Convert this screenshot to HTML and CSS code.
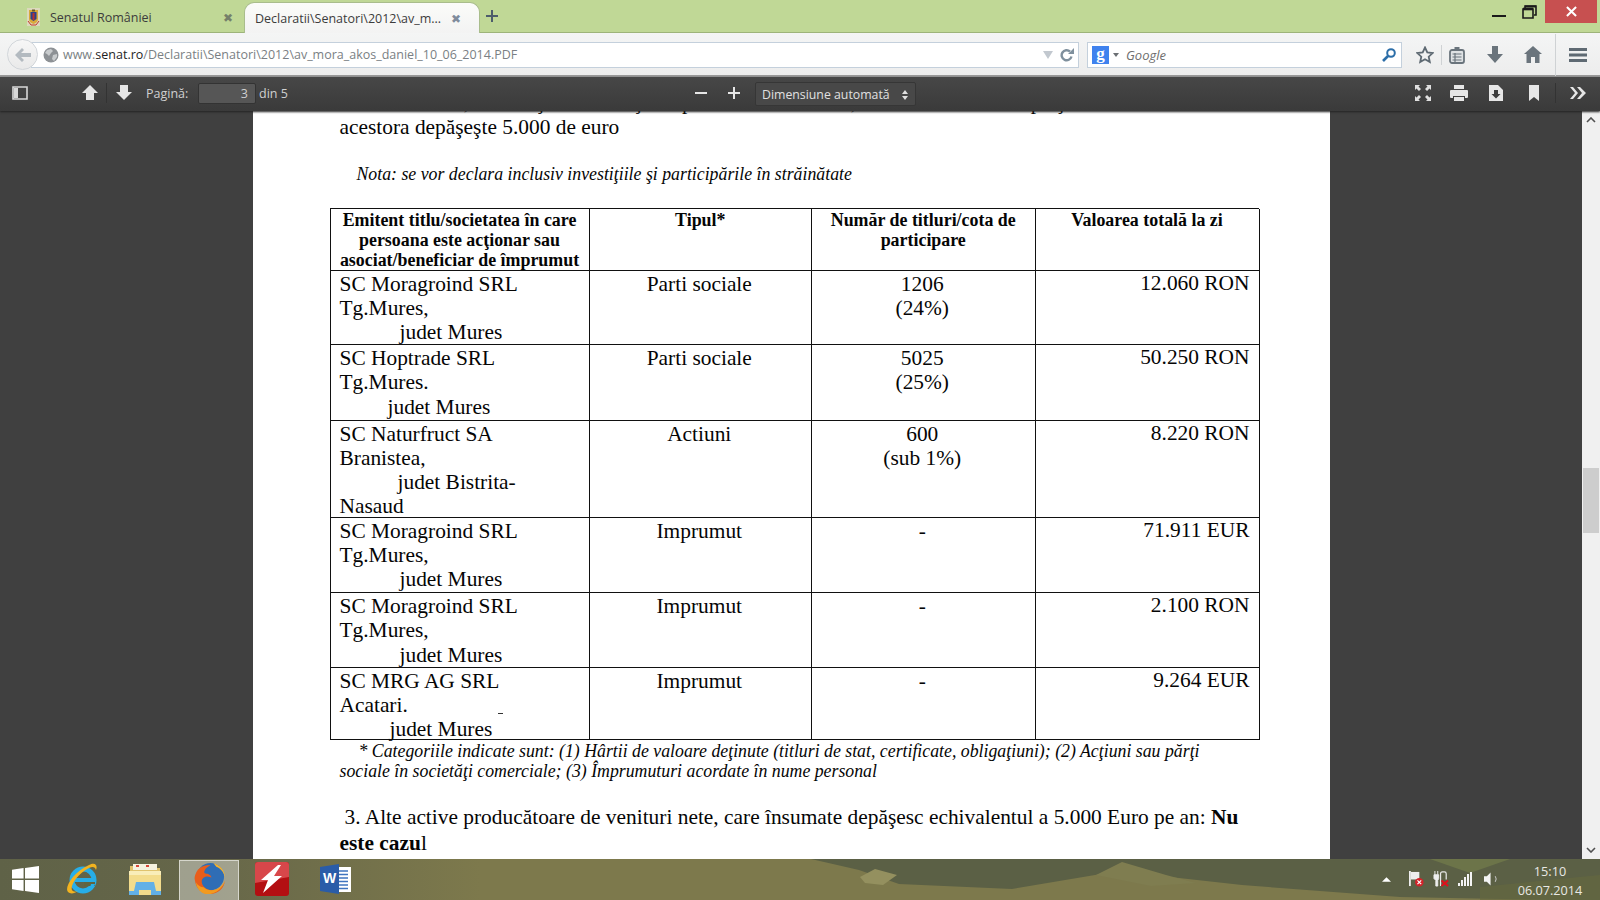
FILE: index.html
```html
<!DOCTYPE html>
<html lang="ro">
<head>
<meta charset="utf-8">
<title>Declaratii</title>
<link rel="stylesheet" href="styles.css">
</head>
<body>
<header class="tabbar">
  <div class="tab">
    <svg class="favicon" viewBox="0 0 13 18"><path d="M0 0h13v18H0z" fill="#dcd9bd"/><path d="M2 2h9v9c0 3-2 4-4.500 5C4 15 2 14 2 11z" fill="#d9a93a"/><path d="M3.500 4h6v7L6.500 13l-3-2z" fill="#2d3f8c"/><path d="M5.500 5h2v7h-2z" fill="#b8322a"/><path d="M5 1.500h3v2H5z" fill="#6b5a2a"/><path d="M1 13l3 4h5l3-4" fill="none" stroke="#c23a2a" stroke-width="1"/></svg>
    <span class="tab-title">Senatul României</span>
    <span class="tab-x">✖</span>
  </div>
  <div class="tab tab-active">
    <span class="tab-title">Declaratii\Senatori\2012\av_m...</span>
    <span class="tab-x tab-x-blue">✖</span>
  </div>
  <svg class="newtab" viewBox="0 0 12 12"><path d="M5 0h2v5h5v2H7v5H5V7H0V5h5z" fill="#4d5d6b"/></svg>
  <div class="winctl">
    <span class="win-min"></span>
    <svg class="win-restore" viewBox="0 0 15 14"><path d="M3 3V1h11v9h-2M1 4h10v9H1z" fill="none" stroke="#1a1a1a" stroke-width="1.600"/><path d="M1 4h10" stroke="#1a1a1a" stroke-width="2.600"/><path d="M3 1.500h11" stroke="#1a1a1a" stroke-width="2"/></svg>
    <div class="win-close"><svg viewBox="0 0 12 12"><path d="M1 1l10 10M11 1L1 11" stroke="#fff" stroke-width="2.200"/></svg></div>
  </div>
</header>

<nav class="navbar">
  <div class="back">
    <svg viewBox="0 0 16 14"><path d="M7 0l2 2-3 3h10v4H6l3 3-2 2-7-7z" fill="#b3bac0"/></svg>
  </div>
  <div class="urlbar">
    <svg class="globe" viewBox="0 0 16 16"><circle cx="8" cy="8" r="7.500" fill="#8d9195"/><path d="M4 3l4-1 2 2-2 2-2 3-2-2-2-1zM10 8l4-1 0 3-3 4-2-2z" fill="#c9ccce"/></svg>
    <span class="url"><span class="url-host">www.<b>senat.ro</b></span>/Declaratii\Senatori\2012\av_mora_akos_daniel_10_06_2014.PDF</span>
    <svg class="url-drop" viewBox="0 0 10 8"><path d="M0 0h10L5 8z" fill="#c2c8cf"/></svg>
    <svg class="url-reload" viewBox="0 0 14 14"><path d="M11.500 8.500A5 5 0 1 1 10 3.500" fill="none" stroke="#7f909d" stroke-width="2.400"/><path d="M8 6h6V0z" fill="#7f909d"/></svg>
  </div>
  <div class="searchbar">
    <span class="g-box">g</span>
    <svg class="g-drop" viewBox="0 0 6 4"><path d="M0 0h6L3 4z" fill="#6b6f73"/></svg>
    <span class="g-text">Google</span>
    <svg class="g-lens" viewBox="0 0 14 14"><circle cx="9" cy="5" r="3.800" fill="none" stroke="#2c6ea8" stroke-width="2"/><path d="M6 8l-5 5" stroke="#2c6ea8" stroke-width="2.600"/></svg>
  </div>
  <div class="navicons">
    <svg class="ni ni-star" viewBox="0 0 18 18"><path d="M9 1.500l2.300 5 5.300.6-3.900 3.600 1.100 5.300L9 13.300 4.200 16l1.100-5.300L1.400 7.100l5.300-.6z" fill="none" stroke="#5f6a73" stroke-width="1.800"/></svg>
    <span class="ni-sep"></span>
    <svg class="ni ni-clip" viewBox="0 0 16 18"><rect x="1" y="4" width="14" height="13" rx="2" fill="#dfe2e4" stroke="#6a747c" stroke-width="1.800"/><path d="M5.500 1h5v4h-5z" fill="#6a747c"/><path d="M3.500 8h9M3.500 11h9M3.500 14h9M6 7v9" stroke="#6a747c" stroke-width="1.200"/></svg>
    <svg class="ni ni-down" viewBox="0 0 16 18"><path d="M5 0h6v8h5l-8 9-8-9h5z" fill="#6a747c"/></svg>
    <svg class="ni ni-home" viewBox="0 0 18 17"><path d="M9 0l9 8h-2.500v9H11v-6H7v6H2.500V8H0z" fill="#6a747c"/></svg>
    <span class="ni-sep ni-sep2"></span>
    <svg class="ni ni-menu" viewBox="0 0 18 16"><path d="M0 1h18v3H0zM0 6.500h18v3H0zM0 12h18v3H0z" fill="#5f6a73"/></svg>
  </div>
</nav>

<div class="pdfbar">
  <svg class="pi pi-side" viewBox="0 0 16 14"><path d="M1 1h14v12H1z" fill="none" stroke="#d8d8d8" stroke-width="1.600"/><path d="M2 2h4v10H2z" fill="#d8d8d8"/></svg>
  <svg class="pi pi-up" viewBox="0 0 16 16"><path d="M8 0l8 8h-4v7H4V8H0z" fill="#e6e6e6"/></svg>
  <span class="pi-sep"></span>
  <svg class="pi pi-dn" viewBox="0 0 16 16"><path d="M4 0h8v7h4l-8 8-8-8h4z" fill="#e6e6e6"/></svg>
  <span class="pg-label">Pagină:</span>
  <span class="pg-input">3</span>
  <span class="pg-total">din 5</span>
  <svg class="pi pi-minus" viewBox="0 0 12 12"><path d="M0 5h12v2H0z" fill="#e6e6e6"/></svg>
  <svg class="pi pi-plus" viewBox="0 0 12 12"><path d="M5 0h2v5h5v2H7v5H5V7H0V5h5z" fill="#e6e6e6"/></svg>
  <div class="zoomsel"><span>Dimensiune automată</span><svg viewBox="0 0 6 10"><path d="M3 0l3 4H0zM3 10L0 6h6z" fill="#e0e0e0"/></svg></div>
  <div class="pdf-right">
    <svg class="pi pi-full" viewBox="0 0 16 16"><path d="M0 0h5L3.500 1.500 6 4 4 6 1.500 3.500 0 5zM16 0v5l-1.500-1.500L12 6l-2-2 2.500-2.500L11 0zM0 16v-5l1.500 1.500L4 10l2 2-2.500 2.500L5 16zM16 16h-5l1.500-1.500L10 12l2-2 2.500 2.500L16 11z" fill="#e0e0e0"/></svg>
    <svg class="pi pi-print" viewBox="0 0 18 16"><path d="M4 0h10v4H4zM1 5h16q1 0 1 1v6q0 1-1 1h-2v-2H3v2H1q-1 0-1-1V6q0-1 1-1zM4 12h10v4H4z" fill="#e6e6e6"/></svg>
    <svg class="pi pi-save" viewBox="0 0 14 16"><path d="M0 0h9l5 5v11H0z" fill="#e6e6e6"/><path d="M5 5h4v4h2.500L7 13.500 2.500 9H5z" fill="#3c3c3c"/></svg>
    <svg class="pi pi-mark" viewBox="0 0 10 16"><path d="M0 0h10v16l-5-4-5 4z" fill="#e6e6e6"/></svg>
    <span class="pi-sep pi-sep2"></span>
    <svg class="pi pi-more" viewBox="0 0 16 12"><path d="M0 0h3l5 6-5 6H0l5-6zM7 0h3l6 6-6 6H7l5-6z" fill="#e6e6e6"/></svg>
  </div>
</div>

<main class="viewer">
  <div class="canvas">
    <article class="page">
      <p class="doc clip-line">2. Plasamente, investiţii directe şi împrumuturi acordate, dacă valoarea de piaţă însumată a tuturor</p>
      <p class="doc">acestora depăşeşte 5.000 de euro</p>
      <p class="nota">Nota: se vor declara inclusiv investiţiile şi participările în străinătate</p>
      <div class="assets">
        <div class="cell th">Emitent titlu/societatea în care persoana este acţionar sau asociat/beneficiar de împrumut</div>
        <div class="cell th">Tipul*</div>
        <div class="cell th">Număr de titluri/cota de participare</div>
        <div class="cell th">Valoarea totală la zi</div>

        <div class="cell">SC Moragroind SRL<br>Tg.Mures,<br><span class="in60">judet Mures</span></div>
        <div class="cell ctr">Parti sociale</div><div class="cell ctr">1206<br>(24%)</div><div class="cell rgt">12.060 RON</div>

        <div class="cell">SC Hoptrade SRL<br>Tg.Mures.<br><span class="in48">judet Mures</span></div>
        <div class="cell ctr">Parti sociale</div><div class="cell ctr">5025<br>(25%)</div><div class="cell rgt">50.250 RON</div>

        <div class="cell">SC Naturfruct SA<br>Branistea,<br><span class="in58">judet Bistrita-</span><br>Nasaud</div>
        <div class="cell ctr">Actiuni</div><div class="cell ctr">600<br>(sub 1%)</div><div class="cell rgt">8.220 RON</div>

        <div class="cell">SC Moragroind SRL<br>Tg.Mures,<br><span class="in60">judet Mures</span></div>
        <div class="cell ctr">Imprumut</div><div class="cell ctr">-</div><div class="cell rgt">71.911 EUR</div>

        <div class="cell">SC Moragroind SRL<br>Tg.Mures,<br><span class="in60">judet Mures</span></div>
        <div class="cell ctr">Imprumut</div><div class="cell ctr">-</div><div class="cell rgt">2.100 RON</div>

        <div class="cell has-speck">SC MRG AG SRL<br>Acatari.<br><span class="in50">judet Mures</span><i class="speck"></i></div>
        <div class="cell ctr">Imprumut</div><div class="cell ctr">-</div><div class="cell rgt">9.264 EUR</div>
      </div>
      <p class="foot"><span class="foot-in">* Categoriile indicate sunt: (1) Hârtii de valoare deţinute (titluri de stat, certificate, obligaţiuni); (2) Acţiuni sau părţi</span><br>sociale în societăţi comerciale; (3) Împrumuturi acordate în nume personal</p>
      <p class="doc alte"><span class="alte-in">3. Alte active producătoare de venituri nete, care însumate depăşesc echivalentul a 5.000 Euro pe an: <b>Nu</b></span><br><b>este cazu</b>l</p>
    </article>
  </div>
  <aside class="scrollbar">
    <svg class="sb-arrow" viewBox="0 0 10 6"><path d="M1 5l4-4 4 4" fill="none" stroke="#505050" stroke-width="1.600"/></svg>
    <div class="sb-track"><div class="sb-thumb"></div></div>
    <svg class="sb-arrow" viewBox="0 0 10 6"><path d="M1 1l4 4 4-4" fill="none" stroke="#505050" stroke-width="1.600"/></svg>
  </aside>
</main>

<footer class="taskbar">
  <svg class="wallpaper" viewBox="0 0 1600 42" preserveAspectRatio="none">
    <defs><linearGradient id="ground"><stop offset="0" stop-color="#5f6247"/><stop offset=".12" stop-color="#656649"/><stop offset=".3" stop-color="#7d794c"/><stop offset="1" stop-color="#7d794c"/></linearGradient></defs>
    <rect width="1600" height="42" fill="url(#ground)"/>
    <path d="M0 0h811l48 11 40 14 113 5 89-15 60 2 81 9 158 12 200 4V0z" fill="#5b6045"/>
    <path d="M1096 16l26-13 44 13 30 8-45 3z" fill="#7f7d50"/>
    <path d="M1430 0h80l-40 14z" fill="#6c7449"/>
    <path d="M860 18l15-8 22 6-14 10-18-2z" fill="#94905f"/>
    <path d="M1480 28l120-12v26h-120z" fill="#66693f" opacity=".6"/>
  </svg>
  <svg class="tb-win" viewBox="0 0 28 28"><path d="M0 4l12-1.800V13H0zM13.500 2L28 0v13H13.500zM0 14.500h12V26L0 24.200zM13.500 14.500H28V28l-14.500-2z" fill="#fff"/></svg>
  <svg class="tb-ie" viewBox="0 0 34 34"><circle cx="18" cy="18" r="11" fill="none" stroke="#27aee8" stroke-width="5"/><path d="M8 18h21" stroke="#27aee8" stroke-width="4"/><path d="M19 20h11v4H19z" fill="#61643f"/><path d="M26 22h4c-1 4-5 8-11 8 4-1 6-4 7-8z" fill="#27aee8"/><path d="M3 30C-1 26 8 10 24 3c6-3 9 0 7 5-1-3-3-4-7-2C12 12 5 24 7 28c1 2 4 2 6 1-4 3-8 3-10 1z" fill="#f2b31f"/></svg>
  <svg class="tb-folder" viewBox="0 0 36 36"><path d="M3 5h12l3 2h15v22H3z" fill="#e0c36e"/><path d="M6 3h24v6H6z" fill="#f5f2e0"/><path d="M9 4h3v2H9zM19 4h3v2h-3z" fill="#d9473a"/><path d="M2 10h32v22H2z" fill="#f3dc8c"/><path d="M2 10h32v4H2z" fill="#f9edb9"/><path d="M7 30l2-9h18l2 9h5v4H2v-4z" fill="#62b0e6"/><path d="M12 29h12v5H12z" fill="#f3dc8c"/></svg>
  <div class="tb-active">
    <svg class="tb-ff" viewBox="0 0 34 34"><circle cx="18" cy="15" r="14" fill="#2f6db5"/><path d="M21 1c7 2 12 8 12 15-1-5-4-9-9-11z" fill="#f6b32d"/><path d="M5 8C3 11 1 15 2 19c1 8 7 14 15 14 9 0 15-6 16-14-1 5-6 10-13 10-7 0-11-5-11-9 0-3 3-5 6-5 2 0 3 1 4 1 0-2-3-4-5-4-3 0-3-2-1-5 2-2 4-3 5-4C12 3 8 5 5 8z" fill="#e95d1b"/><path d="M13 33c10 1 18-6 20-14-3 6-8 10-14 10-3 0-6-1-8-3-3 0-6-2-8-5 1 6 5 11 10 12z" fill="#f29a1f"/></svg>
  </div>
  <svg class="tb-flash" viewBox="0 0 36 36"><rect x="1" y="1" width="34" height="34" rx="3" fill="#b30f12"/><path d="M1 4q0-3 3-3h28q3 0 3 3v12L1 22z" fill="#d8474a"/><path d="M24 4L7 19h7L9 32l19-17h-8l7-11z" fill="#fff"/></svg>
  <svg class="tb-word" viewBox="0 0 32 32"><path d="M12 4h19v25H12z" fill="#fff"/><path d="M15 8h13M15 11.500h13M15 15h13M15 18.500h13M15 22h13M15 25.500h13" stroke="#3f74bf" stroke-width="1.500"/><path d="M0 4l19-3v30L0 28z" fill="#2a5ca8"/><text class="word-w" x="3" y="20">W</text></svg>
  <div class="tray">
    <svg class="tr-up" viewBox="0 0 10 5"><path d="M5 0l5 5H0z" fill="#fff"/></svg>
    <svg class="tr-flag" viewBox="0 0 18 17"><path d="M1 0h2v16H1z" fill="#eee"/><path d="M3 1h9v8H3z" fill="#eee"/><circle cx="12" cy="12" r="4.500" fill="#d2232a"/><path d="M10 10l4 4M14 10l-4 4" stroke="#fff" stroke-width="1.200"/></svg>
    <svg class="tr-plug" viewBox="0 0 18 17"><path d="M2 0v4M5 0v4M1 4h5v4l-1 2v6H3v-6L1 8z" fill="#eee" stroke="#eee"/><path d="M8 16V3q0-2 2-2h2q2 0 2 2v6" fill="none" stroke="#e8e8e8" stroke-width="1.300"/><path d="M9 10l7 6M16 10l-7 6" stroke="#e0101c" stroke-width="2"/></svg>
    <svg class="tr-sig" viewBox="0 0 14 14"><path d="M0 11h2v3H0zM3 8h2v6H3zM6 5h2v9H6zM9 2h2v12H9zM12 0h2v14h-2z" fill="#f4f4f4"/></svg>
    <svg class="tr-vol" viewBox="0 0 16 14"><path d="M0 4h3l4-4v14l-4-4H0z" fill="#f4f4f4"/><path d="M12 4q2 3 0 6" fill="none" stroke="#cfcfcf" stroke-width="1"/></svg>
    <div class="clock"><span>15:10</span><span>06.07.2014</span></div>
  </div>
</footer>
</body>
</html>
```
FILE: styles.css
```css
* { box-sizing: border-box; }
html, body { margin: 0; height: 100%; overflow: hidden; }
body { display: flex; flex-direction: column; width: 1600px; height: 900px; font-family: "Open Sans", "Noto Sans", sans-serif; }

/* Tab strip */
.tabbar { flex: 0 0 32px; display: flex; align-items: stretch; background: #c0d896; position: relative; padding-left: 16px; border-bottom: 1px solid #9db47a; }
.tab { width: 228px; display: flex; align-items: center; padding: 3px 11px 0 11px; font-size: 12.500px; color: #3c3c3c; }
.favicon { width: 13px; height: 18px; margin: -1px 10px 0 0; flex: none; }
.tab-title { flex: 1; white-space: nowrap; overflow: hidden; }
.tab-x { font-size: 12px; color: #75806a; }
.tab-x-blue { color: #7f8c9c; }
.tab-active { width: 236px; margin-top: 2px; padding: 1px 18px 0 10px; background: linear-gradient(#fbfcf9, #f3f3f3); border-radius: 10px 10px 0 0; border: 1px solid #a9bd8c; border-bottom: 0; height: 31px; margin-bottom: -1px; }
.newtab { width: 12px; height: 12px; margin: 10px 0 0 6px; }
.winctl { margin-left: auto; display: flex; align-items: flex-start; padding-right: 3px; }
.win-min { width: 14px; height: 2px; margin: 15px 16px 0 0; background: #1a1a1a; }
.win-restore { width: 15px; height: 14px; margin: 5px 8px 0 0; }
.win-close { width: 52px; height: 23px; background: #c75050; display: flex; align-items: center; justify-content: center; }
.win-close svg { width: 11px; height: 11px; }

/* Navigation */
.navbar { flex: 0 0 44px; display: flex; align-items: center; background: linear-gradient(#f4f5f5, #ededed); border-bottom: 2px solid #9a9a9a; padding: 1px 0 0 7px; position: relative; }
.back { width: 31px; height: 31px; border-radius: 50%; background: linear-gradient(#f7f7f7, #e9e9e9); border: 1px solid #d2d6da; display: flex; align-items: center; justify-content: center; z-index: 1; flex: none; }
.back svg { width: 16px; height: 14px; }
.urlbar { width: 1048px; height: 26px; margin-left: -7px; padding: 0 4px 0 11px; background: #fff; border: 1px solid #c4d0dc; display: flex; align-items: center; font-size: 12.500px; color: #7a7f84; flex: none; }
.globe { width: 16px; height: 16px; margin-right: 4px; flex: none; }
.url { flex: 1; white-space: nowrap; }
.url-host { color: #7a7f84; }
.url-host b { color: #1f1f1f; font-weight: 400; }
.url-drop { width: 10px; height: 8px; margin-right: 7px; }
.url-reload { width: 14px; height: 14px; }
.searchbar { width: 315px; height: 26px; margin-left: 8px; padding: 0 5px 0 4px; background: #fff; border: 1px solid #c4d0dc; display: flex; align-items: center; flex: none; }
.g-box { width: 17px; height: 18px; background: #3f82ee; color: #fff; font: 700 17px "Liberation Serif", serif; text-align: center; line-height: 16px; }
.g-drop { width: 6px; height: 4px; margin: 0 7px 0 4px; }
.g-text { flex: 1; font-size: 13px; font-style: italic; color: #6e6e6e; }
.g-lens { width: 14px; height: 14px; }
.navicons { display: flex; align-items: center; flex: none; height: 32px; }
.ni { flex: none; }
.ni-star { width: 18px; height: 18px; margin-left: 14px; }
.ni-sep { width: 1px; height: 20px; background: #cfd2d4; margin-left: 7px; }
.ni-clip { width: 16px; height: 18px; margin-left: 7px; }
.ni-down { width: 16px; height: 18px; margin-left: 22px; }
.ni-home { width: 18px; height: 17px; margin-left: 21px; }
.ni-sep2 { height: 42px; margin-left: 13px; }
.ni-menu { width: 18px; height: 16px; margin-left: 13px; }

/* PDF toolbar */
.pdfbar { flex: 0 0 34px; display: flex; align-items: center; background: linear-gradient(#474747, #3a3a3a); box-shadow: 0 1px 2px #222; color: #d0d0d0; font-size: 12.500px; position: relative; z-index: 2; padding: 0 0 2px 12px; }
.pi { flex: none; }
.pi-side { width: 16px; height: 14px; }
.pi-up { width: 16px; height: 16px; margin-left: 54px; }
.pi-sep { width: 1px; height: 20px; background: #333; margin-left: 8px; }
.pi-dn { width: 16px; height: 16px; margin-left: 9px; }
.pg-label { margin-left: 14px; width: 52px; }
.pg-input { width: 58px; height: 21px; background: #565656; border: 1px solid #333; border-radius: 2px; text-align: right; padding-right: 7px; line-height: 19px; }
.pg-total { margin-left: 3px; width: 436px; }
.pi-minus { width: 12px; height: 12px; }
.pi-plus { width: 12px; height: 12px; margin-left: 21px; }
.zoomsel { width: 161px; height: 24px; margin: 2px 0 0 15px; padding: 1px 7px 0 6px; background: #484848; border: 1px solid #363636; border-radius: 2px; display: flex; align-items: center; justify-content: space-between; color: #e0e0e0; font-size: 12.300px; }
.zoomsel svg { width: 6px; height: 10px; }
.pdf-right { margin-left: auto; display: flex; align-items: center; padding-right: 14px; }
.pi-full { width: 16px; height: 16px; }
.pi-print { width: 18px; height: 16px; margin-left: 19px; }
.pi-save { width: 14px; height: 16px; margin-left: 21px; }
.pi-mark { width: 10px; height: 16px; margin-left: 26px; }
.pi-sep2 { margin-left: 16px; }
.pi-more { width: 16px; height: 12px; margin-left: 14px; }

/* Viewer */
.viewer { flex: 0 0 748px; display: flex; overflow: hidden; min-height: 0; }
.canvas { flex: 1; background: #404040; display: flex; justify-content: center; overflow: hidden; }
.page { width: 1077px; height: 748px; background: #fff; padding-left: 87px; color: #050505; font-family: "Liberation Serif", "Times New Roman", serif; overflow: hidden; flex: none; }
.doc { margin: 0; font-size: 21.400px; line-height: 24.500px; white-space: nowrap; }
.clip-line { margin-top: -21px; word-spacing: 5.400px; }
.nota { margin: 25px 0 0 17px; font-size: 17.800px; line-height: 20px; font-style: italic; }
.assets { margin: 23.500px 0 0 -10px; width: 929px; display: grid; grid-template-columns: 259px 222.500px 223.500px 224px; grid-template-rows: 62px 74.500px 75.500px 97px 75.500px 74.500px 72.500px; border-top: 1.500px solid #111; border-left: 1.500px solid #111; }
.cell { border-right: 1.500px solid #111; border-bottom: 1.500px solid #111; padding: 1px 9px 0; font-size: 21.400px; line-height: 24.300px; min-height: 0; }
.cell.th { font-size: 17.900px; line-height: 20.300px; font-weight: 700; text-align: center; padding: 1px 3px 0; }
.cell.ctr { text-align: center; padding-right: 10px; padding-left: 8px; }
.cell.rgt { text-align: right; padding-top: 0; }
.in60 { padding-left: 60px; } .in58 { padding-left: 58px; } .in50 { padding-left: 50px; } .in48 { padding-left: 48px; }
.has-speck { position: relative; }
.speck { position: absolute; left: 167px; top: 45px; width: 5px; height: 1px; background: #333; }
.foot { margin: 1px 0 0; font-size: 17.800px; line-height: 20px; font-style: italic; white-space: nowrap; }
.foot-in { padding-left: 19px; }
.alte { margin-top: 22.500px; line-height: 26.500px; }
.alte-in { padding-left: 5px; }

.scrollbar { flex: 0 0 18px; background: #f0f0f0; display: flex; flex-direction: column; align-items: center; }
.sb-arrow { width: 10px; height: 6px; margin: 6px 0; flex: none; }
.sb-track { flex: 1; width: 100%; padding-top: 339px; }
.sb-thumb { height: 65px; background: #cdcdcd; margin: 0 1px; }

/* Taskbar */
.taskbar { flex: 0 0 42px; display: flex; align-items: center; padding: 0 0 2px 12px; position: relative; overflow: hidden; }
.wallpaper { position: absolute; left: 0; top: 0; width: 1600px; height: 42px; }
.taskbar > svg:not(.wallpaper), .tb-active, .tray { position: relative; }
.tb-win { width: 27px; height: 27px; flex: none; }
.tb-ie { width: 34px; height: 34px; margin-left: 26px; flex: none; }
.tb-folder { width: 36px; height: 36px; margin-left: 28px; flex: none; }
.tb-active { width: 60px; height: 41px; margin: 2px 0 0 16px; background: rgba(255,255,255,.38); border: 1px solid #d6d6cc; display: flex; align-items: center; justify-content: center; flex: none; padding-bottom: 3px; }
.tb-ff { width: 33px; height: 33px; }
.tb-flash { width: 36px; height: 36px; margin-left: 15px; flex: none; }
.tb-word { width: 32px; height: 32px; margin-left: 30px; flex: none; }
.word-w { font: 700 14px "Liberation Sans", sans-serif; fill: #fff; }
.tray { margin-left: auto; display: flex; align-items: center; padding-right: 17px; }
.tr-up { width: 9px; height: 5px; }
.tr-flag { width: 17px; height: 16px; margin-left: 17px; }
.tr-plug { width: 17px; height: 16px; margin-left: 8px; }
.tr-sig { width: 14px; height: 14px; margin-left: 8px; }
.tr-vol { width: 15px; height: 14px; margin-left: 12px; }
.clock { width: 66px; margin: 3px 0 0 18px; display: flex; flex-direction: column; align-items: center; font-size: 12.700px; line-height: 19px; color: #e8e8e4; }
```
